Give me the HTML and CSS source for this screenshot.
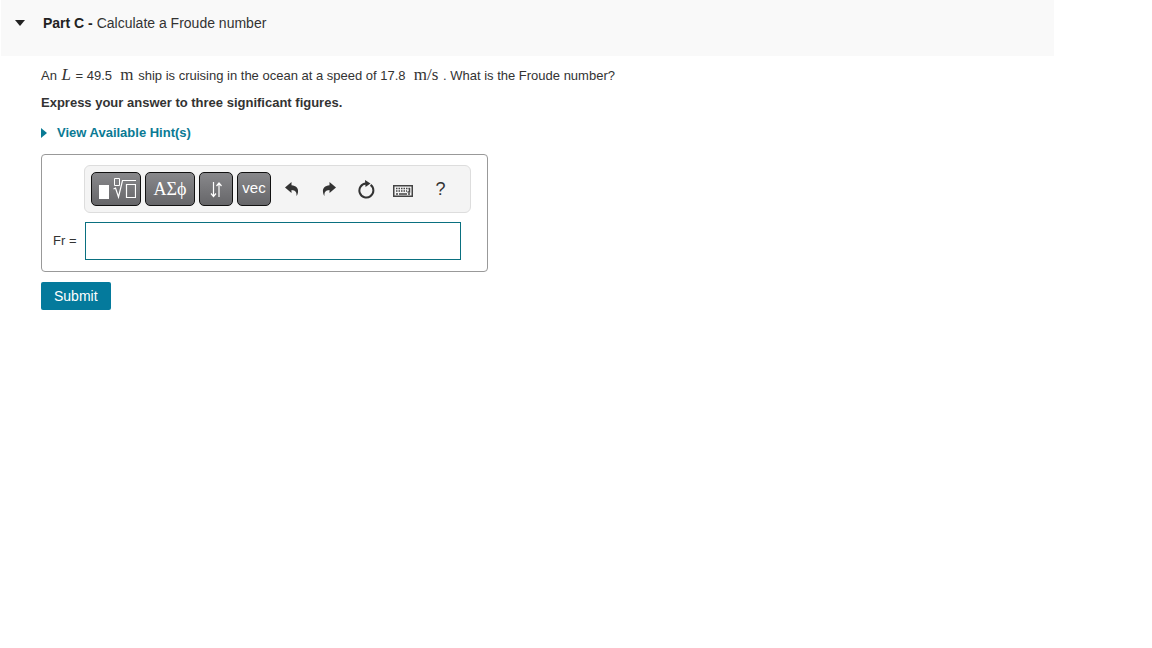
FILE: index.html
```html
<!DOCTYPE html>
<html lang="en">
<head>
<meta charset="utf-8">
<meta name="viewport" content="width=device-width, initial-scale=1">
<title>Part C - Calculate a Froude number</title>
<link rel="stylesheet" href="styles.css">
</head>
<body>
<main class="page">
  <header class="part-header">
    <button class="part-toggle" type="button" aria-expanded="true" aria-label="Collapse part">
      <svg width="10" height="6" viewBox="0 0 10 6"><path d="M0 0h10L5 6z" fill="#222"/></svg>
    </button>
    <h1 class="part-title"><b>Part C -</b> Calculate a Froude number</h1>
  </header>
  <section class="part-body">
    <p class="question">An <i class="math">L</i> = 49.5 &nbsp;<span class="math">m</span> ship is cruising in the ocean at a speed of 17.8 &nbsp;<span class="math">m/s</span> . What is the Froude number?</p>
    <p class="instruction">Express your answer to three significant figures.</p>
    <button class="hints" type="button" aria-expanded="false">
      <svg width="6" height="10" viewBox="0 0 6 10"><path d="M0 0l6 5-6 5z" fill="#0a7a94"/></svg>
      View Available Hint(s)
    </button>
    <form class="answer">
      <div class="answer-box">
        <div class="toolbar" role="toolbar" aria-label="Equation tools">
          <button class="key key-wide" type="button" aria-label="Templates">
            <svg width="40" height="24" viewBox="0 0 40 24" fill="none" stroke="#fff">
              <path d="M3 8h10v14H3z" fill="#fff" stroke="none"/>
              <path d="M18.500 1.500h5v7h-5z"/>
              <path d="M17.500 12l2-1 3 9 4-16.500h13.500" stroke-width="1.200"/>
              <path d="M30.500 7.500h9v13h-9z" stroke-width="1.200"/>
            </svg>
          </button>
          <button class="key key-wide key-greek" type="button">ΑΣϕ</button>
          <button class="key" type="button" aria-label="Subscript and superscript">
            <svg width="14" height="18" viewBox="0 0 14 18" fill="none" stroke="#fff" stroke-width="1.200"><path d="M4.500 2v14.500M2 13.500l2.500 3 2.500-3M10 17V3M7.500 6L10 3l2.500 3"/></svg>
          </button>
          <button class="key key-vec" type="button">vec</button>
          <button class="tool" type="button" aria-label="Undo">
            <svg width="16" height="16" viewBox="0 0 16 16"><path d="M1 6.500L7.500 1v3.200C12 4.500 14.500 7 14 11c-.1 1.500-.7 3-1.500 4 .4-3.500-1-5.800-5-6v3z" fill="#333"/></svg>
          </button>
          <button class="tool" type="button" aria-label="Redo">
            <svg width="16" height="16" viewBox="0 0 16 16"><path d="M15 6.500L8.500 1v3.200C4 4.500 1.500 7 2 11c.1 1.500.7 3 1.500 4-.4-3.500 1-5.800 5-6v3z" fill="#333"/></svg>
          </button>
          <button class="tool" type="button" aria-label="Reset">
            <svg width="18" height="20" viewBox="0 0 18 20"><path d="M13.600 5.900A7 7 0 1 1 9 4.500" fill="none" stroke="#333" stroke-width="2"/><path d="M8 1l5.500 3.500L8.500 8z" fill="#333"/></svg>
          </button>
          <button class="tool tool-keyboard" type="button" aria-label="Keyboard shortcuts">
            <svg width="20" height="14" viewBox="0 0 20 14"><path d="M.75 1.750h18.500v10.500H.75z" fill="none" stroke="#444" stroke-width="1.500"/><path d="M3 4.500h14M3 7h11" stroke="#444" stroke-width="1.500" stroke-dasharray="1.500 1"/><path d="M3 10h2M6 10h8M15 10h2M16.500 4v4h-2" fill="none" stroke="#444" stroke-width="1.500"/></svg>
          </button>
          <button class="tool tool-help" type="button" aria-label="Help">?</button>
        </div>
        <label class="answer-label" for="froude">Fr =</label>
        <input class="answer-input" id="froude" type="text" autocomplete="off">
      </div>
      <button class="submit" type="submit">Submit</button>
    </form>
  </section>
</main>
</body>
</html>
```
FILE: styles.css
```css
* {
  box-sizing: border-box;
}

body {
  margin: 0;
  background: #fff;
  color: #333;
  font: 13px/20px "Liberation Sans", Arial, sans-serif;
}

button {
  font: inherit;
  color: inherit;
  padding: 0;
  border: 0;
  background: none;
  cursor: pointer;
}

svg {
  display: block;
}

.page {
  margin: 0 98px 0 1px;
}

.part-header {
  display: flex;
  align-items: center;
  gap: 18px;
  padding: 13px 14px 23px;
  background: #f9f9f9;
}

.part-title {
  margin: 0;
  font-size: 14px;
  font-weight: 400;
}

.part-title b {
  color: #222;
}

.part-body {
  padding: 10px 40px;
}

.question,
.instruction {
  margin: 0;
}

.instruction {
  margin-top: 7px;
  font-weight: 700;
}

.math {
  margin: 0 1px;
  font-family: "Liberation Serif", "Times New Roman", serif;
  font-size: 17px;
  line-height: 16px;
}

.hints {
  display: flex;
  align-items: center;
  gap: 10px;
  margin-top: 10px;
  color: #0a7a94;
  font-weight: 700;
}

.answer {
  margin-top: 11px;
}

.answer-box {
  display: grid;
  grid-template-columns: 31px 1fr;
  align-items: center;
  row-gap: 9px;
  max-width: 447px;
  padding: 10px 16px 11px 11px;
  border: 1px solid #999;
  border-radius: 4px;
}

.answer-label {
  white-space: nowrap;
}

.toolbar {
  grid-column: 2;
  display: flex;
  align-items: center;
  gap: 4px;
  padding: 6px;
  border: 1px solid #ddd;
  border-radius: 6px;
  background: #f4f4f4;
}

.key {
  display: grid;
  place-items: center;
  width: 34px;
  height: 34px;
  border: 1px solid #111;
  border-radius: 5px;
  background: linear-gradient(#88888b, #666669);
  color: #fff;
}

.key-wide {
  width: 50px;
}

.key-greek {
  font: 18px/20px "Liberation Serif", "DejaVu Serif", serif;
}

.key-vec {
  padding-bottom: 2px;
  font-size: 15px;
}

.tool {
  display: grid;
  place-items: center;
  width: 33px;
  height: 34px;
  color: #333;
}

.tool-keyboard {
  padding-top: 4px;
}

.tool-help {
  padding-left: 2px;
  font-size: 18px;
}

.answer-input {
  width: calc(100% - 11px);
  height: 38px;
  margin-left: 1px;
  padding: 0 8px;
  border: 1px solid #0a7080;
  background: #fff;
  font: inherit;
}

.submit {
  margin-top: 10px;
  padding: 4px 13px;
  border-radius: 2px;
  background: #047a9c;
  color: #fff;
  font-size: 14px;
}
```
